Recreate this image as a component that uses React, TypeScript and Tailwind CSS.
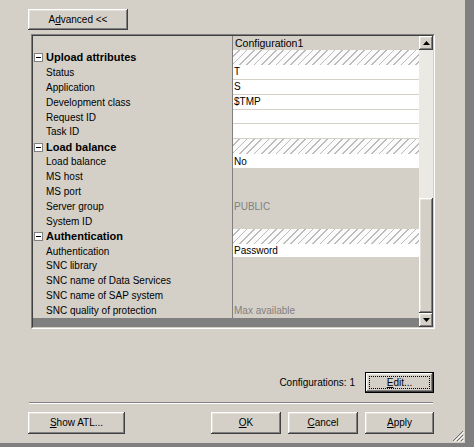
import React from "react";

type Row = {
  label: string;
  group?: boolean;
  cell?: "white" | "gray";
  value?: string;
  dim?: boolean;
};

const ROWS: Row[] = [
  { label: "Upload attributes", group: true },
  { label: "Status", cell: "white", value: "T" },
  { label: "Application", cell: "white", value: "S" },
  { label: "Development class", cell: "white", value: "$TMP" },
  { label: "Request ID", cell: "white" },
  { label: "Task ID", cell: "white" },
  { label: "Load balance", group: true },
  { label: "Load balance", cell: "white", value: "No" },
  { label: "MS host", cell: "gray" },
  { label: "MS port", cell: "gray" },
  { label: "Server group", cell: "gray", value: "PUBLIC", dim: true },
  { label: "System ID", cell: "gray" },
  { label: "Authentication", group: true },
  { label: "Authentication", cell: "white", value: "Password" },
  { label: "SNC library", cell: "gray" },
  { label: "SNC name of Data Services", cell: "gray" },
  { label: "SNC name of SAP system", cell: "gray" },
  { label: "SNC quality of protection", cell: "gray", value: "Max available", dim: true },
];

const RAISED =
  "shadow-[inset_-1px_-1px_0_#404040,inset_1px_1px_0_#ffffff,inset_-2px_-2px_0_#808080,inset_2px_2px_0_#e4e1da]";

function Btn({ children, className = "" }: { children: React.ReactNode; className?: string }) {
  return (
    <button className={`flex items-center justify-center bg-[#d4d0c8] text-[10px] text-black leading-none ${RAISED} ${className}`}>
      {children}
    </button>
  );
}

function Arrow({ up }: { up?: boolean }) {
  return (
    <div className={`h-[14px] flex items-center justify-center bg-[#d4d0c8] ${RAISED}`}>
      <svg width="7" height="4" viewBox="0 0 7 4">
        {up ? <polygon points="0,4 7,4 3.5,0" fill="#000" /> : <polygon points="0,0 7,0 3.5,4" fill="#000" />}
      </svg>
    </div>
  );
}

export default function App() {
  return (
    <div className="w-[474px] h-[447px] flex flex-col bg-[#d4d0c8] font-['Liberation_Sans',Arial,sans-serif] text-black overflow-hidden">
      <div className="flex flex-1">
        <div className="relative flex-1 flex flex-col pl-[28px] pt-[9px]">
          {/* Advanced */}
          <Btn className="w-[100px] h-[21px] text-[10.5px]">
            A<span className="underline">d</span>vanced &lt;&lt;
          </Btn>

          {/* Property grid */}
          <div className="mt-[4px] ml-[3px] w-[404px] h-[295px] border border-t-[#808080] border-l-[#808080] border-b-white border-r-white">
            <div className="w-full h-full flex border border-t-[#404040] border-l-[#404040] border-b-[#d4d0c8] border-r-[#d4d0c8]">
              {/* Table */}
              <div className="flex-1 flex flex-col bg-[#808080]">
                <div className="h-[14px] flex bg-[#d4d0c8]">
                  <div className="w-[199px]" />
                  <div className="flex-1 border-l border-[#808080] pl-[2px] pt-[1px] flex items-center text-[10.5px] leading-none">
                    Configuration1
                  </div>
                </div>
                {ROWS.map((r, i) => (
                  <div key={i} className="h-[14.9px] flex bg-[#d4d0c8]">
                    <div className="w-[199px] pt-[1px] flex items-center text-[10px] leading-none">
                      {r.group ? (
                        <>
                          <span className="ml-[1px] w-[9px] h-[9px] border border-[#808080] bg-white flex items-center justify-center">
                            <span className="w-[5px] h-[1px] bg-black" />
                          </span>
                          <span className="ml-[3px] font-bold text-[11px]">{r.label}</span>
                        </>
                      ) : (
                        <span className="ml-[13px]">{r.label}</span>
                      )}
                    </div>
                    <div className="flex-1 border-l border-[#808080]">
                      {r.group ? (
                        <div className="h-full bg-[repeating-linear-gradient(135deg,#fbfbfb_0px,#fbfbfb_4px,#bcbcbc_4px,#bcbcbc_5.2px)]" />
                      ) : r.cell === "white" ? (
                        <div className="h-full bg-white border-b border-[#d4d0c8] pl-[1px] pt-[1px] flex items-center text-[10px] leading-none">
                          {r.value}
                        </div>
                      ) : (
                        <div className={`h-full pl-[1px] pt-[1px] flex items-center text-[10px] leading-none ${r.dim ? "text-[#808080]" : ""}`}>
                          {r.value}
                        </div>
                      )}
                    </div>
                  </div>
                ))}
              </div>

              {/* Vertical scrollbar */}
              <div className="w-[14px] flex flex-col">
                <Arrow up />
                <div className="h-[148px] bg-[#ebe9e4]" />
                <div className={`flex-1 bg-[#d4d0c8] ${RAISED}`} />
                <Arrow />
              </div>
            </div>
          </div>

          {/* Configurations */}
          <div className="mt-[43px] w-[406px] flex items-center justify-end">
            <span className="text-[10px] mr-[10px]">Configurations: 1</span>
            <div className="border border-black">
              <Btn className="relative w-[67px] h-[19px]">
                <span className="absolute inset-[3px] border border-dotted border-black" />
                <span className="underline">E</span>dit...
              </Btn>
            </div>
          </div>

          {/* Separator */}
          <div className="mt-[9px] ml-[1px] w-[404px] border-t border-[#808080] border-b border-b-white" />

          {/* Bottom buttons */}
          <div className="mt-[8px] w-[406px] flex items-center justify-between">
            <Btn className="w-[97px] h-[22px]">
              <span className="underline">S</span>how ATL...
            </Btn>
            <div className="flex gap-[7px]">
              <Btn className="w-[70px] h-[22px]">
                <span className="underline">O</span>K
              </Btn>
              <Btn className="w-[70px] h-[22px]">
                <span className="underline">C</span>ancel
              </Btn>
              <Btn className="w-[69px] h-[22px]">
                <span className="underline">A</span>pply
              </Btn>
            </div>
          </div>

          {/* Size grip */}
          <svg className="absolute right-[1px] bottom-[1px]" width="12" height="12" viewBox="0 0 12 12">
            <path d="M11 1 L1 11 M11 5 L5 11 M11 9 L9 11" stroke="#6f6f6f" strokeWidth="1" />
            <path d="M12 2 L2 12 M12 6 L6 12 M12 10 L10 12" stroke="#ffffff" strokeWidth="1" />
          </svg>
        </div>
        <div className="w-[9px] bg-[#808080]" />
      </div>
      <div className="h-[4px] bg-[#808080]" />
    </div>
  );
}
